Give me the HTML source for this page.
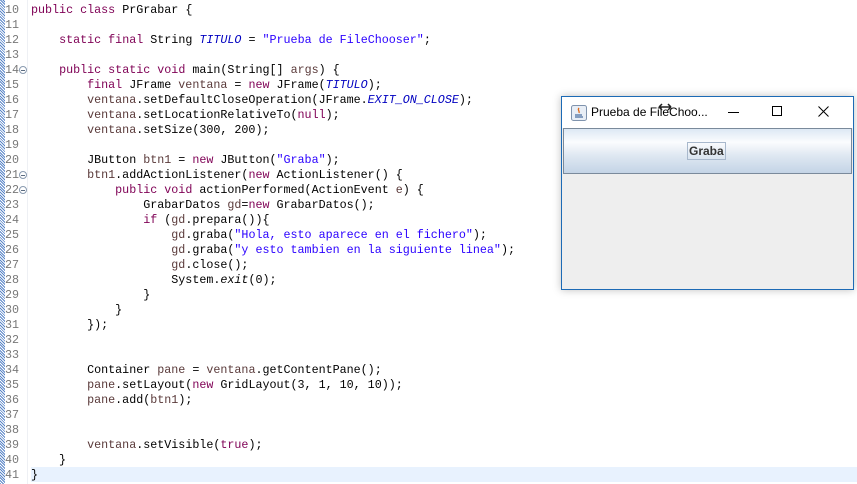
<!DOCTYPE html>
<html><head><meta charset="utf-8"><style>
*{margin:0;padding:0;box-sizing:border-box}
body{width:857px;height:484px;overflow:hidden;background:#fff;position:relative;font-family:"Liberation Mono",monospace}
.strip{position:absolute;left:0;top:0;width:5px;height:484px;background:repeating-linear-gradient(45deg,#5a86c8 0 1px,#fff 1px 2px)}
.gl{position:absolute;left:27px;top:0;width:1px;height:484px;background:#eef0f4}
.hl{position:absolute;left:31px;top:467px;width:826px;height:15px;background:#e8f2fe}
.num{position:absolute;left:5px;top:3px;font-size:11.7px;line-height:15px;color:#787878;white-space:pre}
.code{position:absolute;left:31px;top:3px;font-size:11.7px;line-height:15px;color:#000;white-space:pre}
.k{color:#7f0055}
.s{color:#2a00ff}
.f{color:#0000c0;font-style:italic}
.v{color:#5a3a3a}
.i{font-style:italic}
.fold{position:absolute;left:19px;width:8px;height:8px;border:1px solid #8a9bb0;border-radius:50%;background:#fff}
.fold:after{content:"";position:absolute;left:1px;top:3px;width:4px;height:1px;background:#5b6b80}
.win{position:absolute;left:561px;top:96px;width:293px;height:194px;border:1px solid #1c6ab5;background:#eeeeee;box-shadow:0 0 8px rgba(0,0,0,.25);font-family:"Liberation Sans",sans-serif}
.tb{height:31px;background:#fff;position:relative}
.tb .t{position:absolute;left:29px;top:8px;font-size:12px;color:#000}
.btn{position:absolute;left:1px;top:31px;width:289px;height:46px;border:1px solid #7a8a9b;background:linear-gradient(#dde8f4,#fbfcfe 30%,#dfe8f2 60%,#c4d4e6)}
.btn span{position:absolute;left:123px;top:13px;border:1px solid #a8b8cc;padding:1px 1px;font-size:12px;font-weight:bold;color:#333;line-height:14px}
</style></head><body>
<div class="strip"></div><div class="gl"></div><div class="hl"></div>
<div class="num">10
11
12
13
14
15
16
17
18
19
20
21
22
23
24
25
26
27
28
29
30
31
32
33
34
35
36
37
38
39
40
41</div>
<div class="fold" style="top:66px"></div>
<div class="fold" style="top:171px"></div>
<div class="fold" style="top:186px"></div>
<div class="code"><span class="k">public</span> <span class="k">class</span> PrGrabar {

    <span class="k">static</span> <span class="k">final</span> String <span class="f">TITULO</span> = <span class="s">"Prueba de FileChooser"</span>;

    <span class="k">public</span> <span class="k">static</span> <span class="k">void</span> main(String[] <span class="v">args</span>) {
        <span class="k">final</span> JFrame <span class="v">ventana</span> = <span class="k">new</span> JFrame(<span class="f">TITULO</span>);
        <span class="v">ventana</span>.setDefaultCloseOperation(JFrame.<span class="f">EXIT_ON_CLOSE</span>);
        <span class="v">ventana</span>.setLocationRelativeTo(<span class="k">null</span>);
        <span class="v">ventana</span>.setSize(300, 200);

        JButton <span class="v">btn1</span> = <span class="k">new</span> JButton(<span class="s">"Graba"</span>);
        <span class="v">btn1</span>.addActionListener(<span class="k">new</span> ActionListener() {
            <span class="k">public</span> <span class="k">void</span> actionPerformed(ActionEvent <span class="v">e</span>) {
                GrabarDatos <span class="v">gd</span>=<span class="k">new</span> GrabarDatos();
                <span class="k">if</span> (<span class="v">gd</span>.prepara()){
                    <span class="v">gd</span>.graba(<span class="s">"Hola, esto aparece en el fichero"</span>);
                    <span class="v">gd</span>.graba(<span class="s">"y esto tambien en la siguiente linea"</span>);
                    <span class="v">gd</span>.close();
                    System.<span class="i">exit</span>(0);
                }
            }
        });


        Container <span class="v">pane</span> = <span class="v">ventana</span>.getContentPane();
        <span class="v">pane</span>.setLayout(<span class="k">new</span> GridLayout(3, 1, 10, 10));
        <span class="v">pane</span>.add(<span class="v">btn1</span>);


        <span class="v">ventana</span>.setVisible(<span class="k">true</span>);
    }
}</div>
<div class="win">
 <div class="tb">
  <svg style="position:absolute;left:9px;top:8px" width="16" height="16" viewBox="0 0 16 16"><rect x="0.5" y="0.5" width="15" height="15" rx="2" fill="#e8eef6" stroke="#7f93ad"/><path d="M8 3c-2 2 1 3 0 5" stroke="#e06a1a" fill="none" stroke-width="1.3"/><path d="M4 10h7M4 12h8" stroke="#4a6fa0" stroke-width="1.2"/></svg>
  <div class="t">Prueba de FileChoo...</div>
  <svg style="position:absolute;left:96px;top:6px" width="14" height="8" viewBox="0 0 14 8"><path d="M1 4h12M1 4l3-3M1 4l3 3M13 4l-3-3M13 4l-3 3" stroke="#222" stroke-width="1.5" fill="none"/></svg>
  <div style="position:absolute;left:166px;top:15px;width:11px;height:1px;background:#000"></div>
  <div style="position:absolute;left:210px;top:9px;width:10px;height:10px;border:1px solid #000"></div>
  <svg style="position:absolute;left:256px;top:9px" width="11" height="11" viewBox="0 0 11 11"><path d="M0.5 0.5l10 10M10.5 0.5l-10 10" stroke="#000" stroke-width="1"/></svg>
 </div>
 <div class="btn"><span>Graba</span></div>
</div>
</body></html>
